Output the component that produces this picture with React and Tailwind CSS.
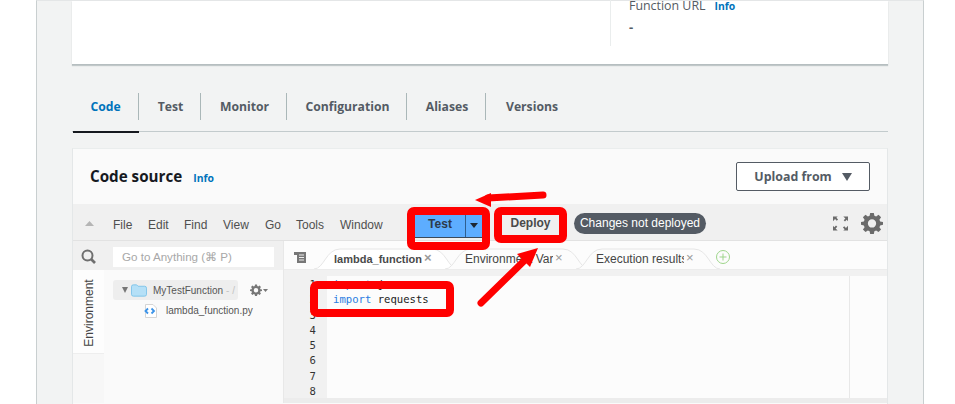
import React from 'react';

const sans = 'font-["Open_Sans",sans-serif]';
const helv = 'font-["Liberation_Sans",sans-serif]';

const TABS = [
  ['Code', 'w-[66px]'],
  ['Test', 'w-[62px]'],
  ['Monitor', 'w-[86px]'],
  ['Configuration', 'w-[120px]'],
  ['Aliases', 'w-[79px]'],
  ['Versions', 'w-[90px]'],
];
const MENU = [
  ['File', 'w-[35px]'],
  ['Edit', 'w-[36px]'],
  ['Find', 'w-[39px]'],
  ['View', 'w-[42px]'],
  ['Go', 'w-[31px]'],
  ['Tools', 'w-[44px]'],
  ['Window', 'w-[67px]'],
];

const Gear = ({ className }) => (
  <svg viewBox="0 0 24 24" className={className} fill="currentColor">
    <path
      fillRule="evenodd"
      d="M10 1h4l.6 3.1 1.9.8L19.1 3 21.9 5.8 20.1 8.4l.8 1.9L24 11v3l-3.1.6-.8 1.9 1.8 2.6-2.8 2.8-2.6-1.8-1.9.8L14 24h-4l-.6-3.1-1.9-.8-2.6 1.8-2.8-2.8 1.8-2.6-.8-1.9L0 14v-3l3.1-.7.8-1.9L2.1 5.8 4.9 3l2.6 1.9 1.9-.8L10 1Zm2 7a4.5 4.5 0 1 0 0 9 4.5 4.5 0 0 0 0-9Z"
    />
  </svg>
);

const EditorTab = ({ label, active }) => (
  <div className="relative h-[21px] w-[144px] -mr-[13px] shrink-0">
    <svg className="absolute inset-0 w-full h-full" viewBox="0 0 144 21" preserveAspectRatio="none" fill="none">
      <path
        d="M0 21 C10 21 12 1 26 1 L118 1 C132 1 134 21 144 21"
        fill={active ? '#ffffff' : '#fcfcfc'}
        stroke="#e6e6e6"
      />
    </svg>
    <div className={`absolute left-[20px] top-[2px] flex items-center ${helv} leading-[18px] ${active ? 'text-[11px] font-bold text-[#4a4a4a]' : 'text-[12px] text-[#444]'}`}>
      <span className="w-[88px] overflow-hidden whitespace-nowrap">{label}</span>
      <span className="ml-[2px] text-[#9a9a9a] text-[13px] leading-[14px] -mt-[3px]">×</span>
    </div>
  </div>
);

const Annotations = () => (
  <svg className="absolute left-0 top-0 w-[955px] h-[404px] pointer-events-none" viewBox="0 0 955 404" fill="none">
    <rect x="411" y="211" width="75" height="35" rx="3" stroke="#ff0000" strokeWidth="8" />
    <rect x="498" y="211" width="65" height="28" rx="3" stroke="#ff0000" strokeWidth="8" />
    <rect x="314" y="285" width="136" height="28" rx="3" stroke="#ff0000" strokeWidth="8" />
    <path d="M488 198 L543 195" stroke="#ff0000" strokeWidth="7" strokeLinecap="round" />
    <path d="M475 200 L491 193 L491 207 Z" fill="#ff0000" />
    <path d="M481 303 L526 259" stroke="#ff0000" strokeWidth="7" strokeLinecap="round" />
    <path d="M538 248 L517 254 L530 267 Z" fill="#ff0000" />
  </svg>
);

export default function App() {
  return (
    <div className={`relative w-[955px] h-[404px] overflow-hidden bg-white ${sans}`}>
      <div className="ml-[36px] w-[888px] h-[404px] border-x border-[#c9cfd0] border-t border-t-[#e4e6e7] bg-[#f2f3f3] px-[35px]">
        {/* function overview card, cut off by the top edge */}
        <div className="h-[64px] bg-white border-b border-[#b6bec0] shadow-[0_1px_1px_rgba(0,28,36,0.2)] flex">
          <div className="ml-[538px] h-[46px] border-l border-[#eaeded] pl-[18px] -mt-[1px]">
            <div className="flex items-center gap-[9px] h-[12px]">
              <span className="text-[12.4px] leading-[12px] text-[#545b64]">Function URL</span>
              <span className="text-[10.4px] leading-[12px] font-bold text-[#0073bb]">Info</span>
            </div>
            <div className="mt-[6px] text-[13px] leading-[18px] font-bold text-[#545b64]">-</div>
          </div>
        </div>

        {/* tabs */}
        <div className="mt-[28px] h-[39px] border-b border-[#c3cbcd] flex pl-[1px]">
          {TABS.map(([t, w], i) => (
            <div key={t} className={`relative h-[39px] ${w}`}>
              <div
                className={`h-[27px] pt-[2px] flex items-center justify-center text-[12.2px] font-bold ${
                  i === 0 ? 'text-[#0073bb]' : 'text-[#545b64] pl-[2px]'
                } ${i < TABS.length - 1 ? 'border-r border-[#aab7b8]' : ''}`}
              >
                {t}
              </div>
              {i === 0 && <div className="absolute left-0 right-0 bottom-[-1px] h-[2px] bg-[#16191f]" />}
            </div>
          ))}
        </div>

        {/* code source card */}
        <div className="mt-[16px] h-[260px] bg-[#fafafa] border-x border-[#e4e7e8] border-t border-t-[#eaeded]">
          <div className="h-[55px] flex items-center justify-between pl-[17px] pr-[17px]">
            <div className="flex items-baseline gap-[11px] -mt-[1px]">
              <span className="text-[15.2px] font-bold text-[#16191f]">Code source</span>
              <span className="text-[10.4px] font-bold text-[#0073bb]">Info</span>
            </div>
            <div className="w-[134px] h-[29px] pt-[2px] border border-[#545b64] rounded-[2px] flex items-center justify-center gap-[10px] bg-white">
              <span className="text-[12.4px] font-bold text-[#545b64]">Upload from</span>
              <svg width="10" height="8" viewBox="0 0 10 8" className="-mt-[2px]"><path d="M0 0H10L5 8Z" fill="#545b64" /></svg>
            </div>
          </div>

          {/* cloud9 toolbar */}
          <div className={`h-[37px] pt-[5px] bg-[#f0f0f0] border-b border-[#e2e2e2] flex items-center ${helv}`}>
            <svg width="9" height="5" viewBox="0 0 9 5" className="ml-[12px] mr-[19px] -mt-[2px]"><path d="M4.5 0L9 5H0Z" fill="#b5b5b5" /></svg>
            {MENU.map(([m, w]) => (
              <span key={m} className={`${w} text-[12px] text-[#4f4f4f]`}>{m}</span>
            ))}
            <div className="ml-[8px] w-[67px] h-[25px] self-start mt-[4px] bg-[#5dadff] border-b border-[#3b4a5a] flex">
              <div className="w-[51px] pb-[2px] border-r border-[#2f5f90] flex items-center justify-center text-[12px] font-bold text-[#2d3a4a]">Test</div>
              <div className="flex-1 flex items-center justify-center">
                <svg width="8" height="5" viewBox="0 0 8 5"><path d="M0 0H8L4 5Z" fill="#1d2733" /></svg>
              </div>
            </div>
            <div className="ml-[20px] w-[57px] h-[22px] -mt-[3px] bg-[#f0f0f0] flex items-center justify-center text-[12px] font-bold text-[#4a4a4a]">Deploy</div>
            <div className="ml-[15px] w-[132px] h-[21px] -mt-[3px] rounded-full bg-[#545b64] flex items-center justify-center text-[12px] text-white">Changes not deployed</div>
            <svg width="15" height="15" viewBox="0 0 16 15" className="ml-[127px] -mt-[3px]" fill="#6b6b6b">
              <path d="M0 0H5L3.6 1.4 5.4 3.2 4 4.6 2.2 2.8 0 5ZM16 0V5L14.6 3.6 12.8 5.4 11.4 4 13.2 2.2 11 0ZM0 15V10L1.4 11.4 3.2 9.6 4.6 11 2.8 12.8 5 15ZM16 15H11L12.4 13.6 10.6 11.8 12 10.4 13.8 12.2 16 10Z" />
            </svg>
            <Gear className="ml-[13px] -mt-[3px] w-[22px] h-[22px] text-[#6b6b6b]" />
          </div>

          {/* ide body */}
          <div className={`flex h-[162px] ${helv}`}>
            {/* environment rail */}
            <div className="w-[31px] shrink-0 bg-[#f7f7f7] flex flex-col">
              <div className="h-[29px] pt-[2px] bg-[#f0f0f0] flex items-center justify-center">
                <svg width="15" height="15" viewBox="0 0 15 15" fill="none" stroke="#6f6f6f" strokeWidth="2">
                  <circle cx="6.5" cy="6.5" r="5" />
                  <path d="M10 10L14 14" strokeWidth="2.6" />
                </svg>
              </div>
              <div className="h-[84px] pt-[2px] bg-[#fdfdfd] border-b border-[#eeeeee] flex items-center justify-center">
                <span className="-rotate-90 text-[12px] text-[#444]">Environment</span>
              </div>
            </div>

            {/* file tree */}
            <div className="w-[180px] shrink-0 bg-[#fafafa] border-r border-[#e8e8e8] flex flex-col">
              <div className="h-[29px] pt-[2px] bg-[#f0f0f0] pl-[9px] pr-[9px] flex items-center">
                <div className="w-[162px] h-[20px] bg-white pl-[9px] text-[11.6px] leading-[20px] text-[#a8a8a8]">Go to Anything (⌘ P)</div>
              </div>
              <div className="pl-[9px] pt-[10px]">
                <div className="flex items-center">
                  <div className="w-[125px] h-[20px] rounded-[3px] bg-[#eeeeee] flex items-center pl-[9px]">
                    <svg width="6" height="6" viewBox="0 0 6 6"><path d="M0 0H6L3 6Z" fill="#777" /></svg>
                    <svg width="16" height="13" viewBox="0 0 17 13" className="ml-[3px]">
                      <path d="M0.5 2.5Q0.5 0.5 2.5 0.5H6L7.5 2H14.5Q16.5 2 16.5 4V10.5Q16.5 12.5 14.5 12.5H2.5Q0.5 12.5 0.5 10.5Z" fill="#b5e0f7" stroke="#7fc4ea" />
                    </svg>
                    <span className="ml-[6px] text-[10px] text-[#555] whitespace-nowrap">MyTestFunction</span>
                    <span className="ml-[3px] text-[10px] text-[#c4c4c4] whitespace-nowrap">- /</span>
                  </div>
                  <Gear className="ml-[12px] w-[12px] h-[12px] text-[#777]" />
                  <svg width="5" height="3" viewBox="0 0 5 3" className="ml-[1px]"><path d="M0 0H5L2.5 3Z" fill="#777" /></svg>
                </div>
                <div className="mt-[1px] h-[19px] flex items-center pl-[31px]">
                  <svg width="13" height="14" viewBox="0 0 13 14">
                    <path d="M1.5 0.5H9L12.5 4V13.5H1.5Z" fill="#fff" stroke="#d5d5d5" />
                    <path d="M4 4.5L1.5 7L4 9.5M7.5 4.5L10 7L7.5 9.5" fill="none" stroke="#3b93e8" strokeWidth="1.8" />
                  </svg>
                  <span className="ml-[9px] text-[10px] text-[#555]">lambda_function.py</span>
                </div>
              </div>
            </div>

            {/* editor */}
            <div className="flex-1 min-w-0 flex flex-col bg-[#fcfcfc]">
              <div className="h-[29px] flex items-end border-b border-[#ececec] relative">
                <svg width="12" height="11" viewBox="0 0 12 11" className="absolute left-[10px] top-[11px]" fill="#777">
                  <path d="M0 0H12V11H3V3H0Z" />
                  <path d="M5 3H10M5 5.5H10M5 8H10" stroke="#eee" />
                </svg>
                <div className="flex ml-[30px]">
                  <EditorTab label="lambda_function" active />
                  <EditorTab label="Environment Variables" />
                  <EditorTab label="Execution results" />
                </div>
                <svg width="14" height="14" viewBox="0 0 14 14" className="absolute left-[432px] top-[9px]" fill="none" stroke="#9ed58b">
                  <circle cx="7" cy="7" r="6.5" />
                  <path d="M7 3.5V10.5M3.5 7H10.5" />
                </svg>
              </div>
              <div className="h-[6px] bg-[#f1f1f1]" />
              <div className="flex h-[122px] overflow-hidden font-['DejaVu_Sans_Mono',monospace] text-[10.6px] leading-[15.3px]">
                <div className="w-[43px] pt-[1px] shrink-0 bg-[#f1f1f1] text-[#333] text-right pr-[11px]">
                  {[1, 2, 3, 4, 5, 6, 7, 8].map((n) => (
                    <div key={n}>{n}</div>
                  ))}
                </div>
                <div className="flex-1 pt-[1px] pl-[6px] text-[#222] border-r border-[#e8e8e8]">
                  <div><span className="text-[#2a7de1]">import</span> json</div>
                  <div><span className="text-[#2a7de1]">import</span> requests</div>
                </div>
                <div className="w-[37px] shrink-0" />
              </div>
              <div className="h-[5px] bg-[#ececec]" />
            </div>
          </div>
        </div>
      </div>
      <Annotations />
    </div>
  );
}
